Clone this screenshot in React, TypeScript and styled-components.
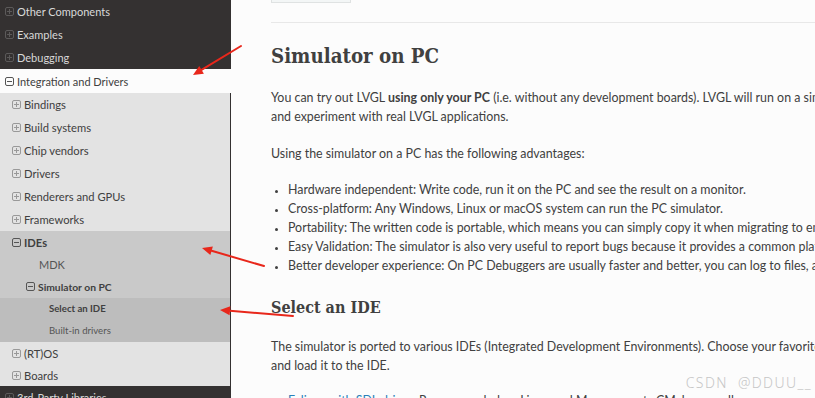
import styled, { createGlobalStyle } from 'styled-components';

const GlobalStyle = createGlobalStyle`
  html, body {
    margin: 0;
    padding: 0;
    height: 398px;
    overflow: hidden;
    background: #fcfcfc;
  }
  #root {
    height: 398px;
  }
`;

const Page = styled.div`
  position: relative;
  display: flex;
  height: 398px;
  overflow: hidden;
  font-family: Lato, 'Noto Sans', sans-serif;
  color: #404040;
`;

const Sidebar = styled.nav`
  flex: 0 0 231px;
  width: 231px;
  height: 398px;
  background: #343131;
  display: flex;
  flex-direction: column;
  overflow: hidden;
`;

const Group = styled.div<{ $bg: string }>`
  display: flex;
  flex-direction: column;
  background: ${(p) => p.$bg};
  width: 230px;
`;

const NavRow = styled.div<{ $indent: number; $height: number; $color: string; $bg?: string; $bold?: boolean; $size: number }>`
  display: flex;
  align-items: center;
  gap: 3px;
  flex: 0 0 ${(p) => p.$height}px;
  height: ${(p) => p.$height}px;
  padding-left: ${(p) => p.$indent}px;
  background: ${(p) => p.$bg || 'transparent'};
  color: ${(p) => p.$color};
  font-size: ${(p) => p.$size}px;
  font-weight: ${(p) => (p.$bold ? 700 : 400)};
  white-space: nowrap;
`;

const Main = styled.main`
  flex: 1;
  min-width: 0;
  padding: 0 0 0 40px;
  overflow: hidden;
`;

const Article = styled.div`
  width: 1000px;
  font-size: 12.4px;
  line-height: 19px;
`;

const TopButton = styled.div`
  width: 78px;
  height: 2px;
  background: #f3f6f6;
  border: 1px solid #dfe2e2;
  border-top: none;
`;

const Rule = styled.hr`
  margin: 19px 0 0 0;
  border: none;
  border-top: 1px solid #e8e8e8;
`;

const Title = styled.h1`
  margin: 20px 0 0 0;
  font-family: 'DejaVu Serif Condensed', 'DejaVu Serif', serif;
  font-stretch: condensed;
  font-size: 20.3px;
  line-height: 27px;
  font-weight: 700;
  color: #404040;
`;

const SubTitle = styled.h2`
  margin: 21px 0 0 0;
  font-family: 'DejaVu Serif Condensed', 'DejaVu Serif', serif;
  font-stretch: condensed;
  font-size: 16px;
  line-height: 23px;
  font-weight: 700;
  color: #404040;
`;

const Para = styled.p<{ $top: number }>`
  margin: ${(p) => p.$top}px 0 0 0;
`;

const List = styled.ul<{ $top: number }>`
  margin: ${(p) => p.$top}px 0 0 0;
  padding-left: 17px;
  list-style: disc;

  li::marker {
    font-size: 10px;
  }
`;

const Link = styled.a`
  color: #2980b9;
  text-decoration: none;
`;

const Watermark = styled.div`
  position: absolute;
  right: 3px;
  bottom: 6px;
  font-family: 'Noto Sans', 'Noto Sans CJK SC', sans-serif;
  font-weight: 300;
  font-size: 14px;
  letter-spacing: 1.4px;
  white-space: pre;
  color: #c6c6c6;
`;

const Overlay = styled.svg`
  position: absolute;
  left: 0;
  top: 0;
  pointer-events: none;
`;

const ToggleIcon = ({ open, color }: { open: boolean; color: string }) => (
  <svg width="9" height="9" viewBox="0 0 9 9" style={{ flex: '0 0 9px' }}>
    <rect x="0.5" y="0.5" width="8" height="8" rx="1.5" fill="none" stroke={color} strokeWidth="1" />
    <line x1="2" y1="4.5" x2="7" y2="4.5" stroke={color} strokeWidth="1" />
    {!open && <line x1="4.5" y1="2" x2="4.5" y2="7" stroke={color} strokeWidth="1" />}
  </svg>
);

type NavItem = {
  label: string;
  indent: number;
  height: number;
  icon?: 'plus' | 'minus';
  bold?: boolean;
  size?: number;
  color?: string;
};

const topItems = ['Other Components', 'Examples', 'Debugging'];
const l2Items = ['Bindings', 'Build systems', 'Chip vendors', 'Drivers', 'Renderers and GPUs', 'Frameworks'];

const ideItems: NavItem[] = [
  { label: 'IDEs', indent: 12, height: 22.33, icon: 'minus', bold: true },
  { label: 'MDK', indent: 39, height: 22.33, color: '#555', size: 11 },
  { label: 'Simulator on PC', indent: 26, height: 22.34, icon: 'minus', bold: true, size: 10.3 },
];

const l4Items: NavItem[] = [
  { label: 'Select an IDE', indent: 49, height: 22, bold: true, size: 9.6 },
  { label: 'Built-in drivers', indent: 49, height: 22, color: '#555', size: 9.6 },
];

const renderItem = (item: NavItem) => (
  <NavRow
    key={item.label}
    $indent={item.indent}
    $height={item.height}
    $color={item.color || '#404040'}
    $bold={item.bold}
    $size={item.size || 11.2}
  >
    {item.icon && <ToggleIcon open={item.icon === 'minus'} color={item.icon === 'minus' ? '#555' : '#999'} />}
    {item.label}
  </NavRow>
);

const Arrow = ({ x1, y1, x2, y2 }: { x1: number; y1: number; x2: number; y2: number }) => {
  const a = Math.atan2(y2 - y1, x2 - x1);
  const len = 10;
  const w = 4.5;
  const bx = x2 - Math.cos(a) * len;
  const by = y2 - Math.sin(a) * len;
  const px = -Math.sin(a) * w;
  const py = Math.cos(a) * w;
  return (
    <g>
      <line x1={x1} y1={y1} x2={bx} y2={by} stroke="#e8271b" strokeWidth="2" strokeLinecap="round" />
      <polygon points={`${x2},${y2} ${bx + px},${by + py} ${bx - px},${by - py}`} fill="#e8271b" />
    </g>
  );
};

export default function App() {
  return (
    <>
      <GlobalStyle />
      <Page>
        <Sidebar>
          {topItems.map((t) => (
            <NavRow key={t} $indent={5} $height={23} $color="#d9d9d9" $size={11}>
              <ToggleIcon open={false} color="#5c5a5a" />
              {t}
            </NavRow>
          ))}
          <NavRow $indent={5} $height={24} $color="#404040" $bg="#fcfcfc" $size={11}>
            <ToggleIcon open color="#555" />
            Integration and Drivers
          </NavRow>
          <Group $bg="#e3e3e3">
            {l2Items.map((t) => renderItem({ label: t, indent: 12, height: 23, icon: 'plus' }))}
            <Group $bg="#c9c9c9">{ideItems.map(renderItem)}</Group>
            <Group $bg="#bdbdbd">{l4Items.map(renderItem)}</Group>
            {renderItem({ label: '(RT)OS', indent: 12, height: 22.5, icon: 'plus' })}
            {renderItem({ label: 'Boards', indent: 12, height: 22, icon: 'plus' })}
          </Group>
          <NavRow $indent={5} $height={23} $color="#d9d9d9" $size={11}>
            <ToggleIcon open={false} color="#5c5a5a" />
            3rd-Party Libraries
          </NavRow>
        </Sidebar>
        <Main>
          <Article>
            <TopButton />
            <Rule />
            <Title>Simulator on PC</Title>
            <Para $top={18}>
              You can try out LVGL <strong>using only your PC</strong> (i.e. without any development boards). LVGL will
              run on a simulator environment on the PC where anyone can write
              <br />
              and experiment with real LVGL applications.
            </Para>
            <Para $top={18}>Using the simulator on a PC has the following advantages:</Para>
            <List $top={17}>
              <li>Hardware independent: Write code, run it on the PC and see the result on a monitor.</li>
              <li>Cross-platform: Any Windows, Linux or macOS system can run the PC simulator.</li>
              <li>Portability: The written code is portable, which means you can simply copy it when migrating to embedded hardware.</li>
              <li>Easy Validation: The simulator is also very useful to report bugs because it provides a common platform for every user.</li>
              <li>Better developer experience: On PC Debuggers are usually faster and better, you can log to files, add a lot of printf-s.</li>
            </List>
            <SubTitle>Select an IDE</SubTitle>
            <Para $top={18}>
              The simulator is ported to various IDEs (Integrated Development Environments). Choose your favorite IDE, read
              its README on GitHub, download the project,
              <br />
              and load it to the IDE.
            </Para>
            <List $top={16}>
              <li>
                <Link>Eclipse with SDL driver</Link>: Recommended on Linux and Mac, supports CMake as well
              </li>
            </List>
          </Article>
        </Main>
        <Watermark>{'CSDN  @DDUU__'}</Watermark>
        <Overlay width="815" height="398">
          <Arrow x1={241} y1={46} x2={193} y2={75} />
          <Arrow x1={264} y1={266} x2={202} y2={248} />
          <Arrow x1={293} y1={316} x2={220} y2={310} />
        </Overlay>
      </Page>
    </>
  );
}
